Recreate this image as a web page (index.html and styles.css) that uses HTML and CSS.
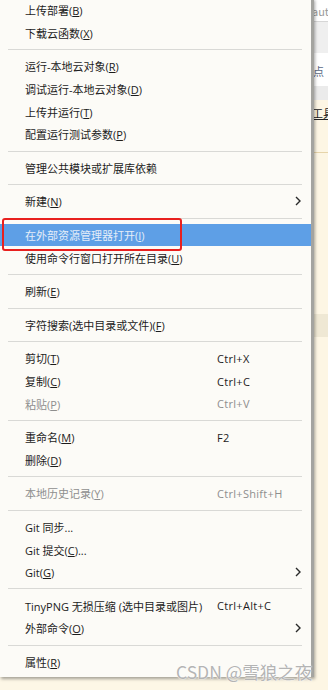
FILE: index.html
```html
<!DOCTYPE html>
<html lang="zh-CN">
  <head>
    <meta charset="UTF-8" />
    <meta name="viewport" content="width=device-width, initial-scale=1.0" />
    <title>右键菜单</title>
    <link rel="stylesheet" href="styles.css">
  </head>
  <body>
    <div class="screen">
      <div class="menu">
        <div class="item"><span class="label">上传部署(<u>B</u>)</span></div>
        <div class="item"><span class="label">下载云函数(<u>X</u>)</span></div>
        <div class="sep"></div>
        <div class="item"><span class="label">运行-本地云对象(<u>R</u>)</span></div>
        <div class="item"><span class="label">调试运行-本地云对象(<u>D</u>)</span></div>
        <div class="item"><span class="label">上传并运行(<u>T</u>)</span></div>
        <div class="item"><span class="label">配置运行测试参数(<u>P</u>)</span></div>
        <div class="sep"></div>
        <div class="item"><span class="label">管理公共模块或扩展库依赖</span></div>
        <div class="sep"></div>
        <div class="item">
          <span class="label">新建(<u>N</u>)</span>
          <svg class="arrow" width="6" height="10" viewBox="0 0 6 10"><path d="M1 1 L5 5 L1 9" /></svg>
        </div>
        <div class="sep"></div>
        <div class="item active">
          <span class="label">在外部资源管理器打开(<u>I</u>)</span>
          <span class="mark"></span>
        </div>
        <div class="item"><span class="label">使用命令行窗口打开所在目录(<u>U</u>)</span></div>
        <div class="sep"></div>
        <div class="item"><span class="label">刷新(<u>E</u>)</span></div>
        <div class="sep"></div>
        <div class="item"><span class="label">字符搜索(选中目录或文件)(<u>F</u>)</span></div>
        <div class="sep"></div>
        <div class="item"><span class="label">剪切(<u>T</u>)</span><span class="key">Ctrl+X</span></div>
        <div class="item"><span class="label">复制(<u>C</u>)</span><span class="key">Ctrl+C</span></div>
        <div class="item disabled"><span class="label">粘贴(<u>P</u>)</span><span class="key">Ctrl+V</span></div>
        <div class="sep"></div>
        <div class="item"><span class="label">重命名(<u>M</u>)</span><span class="key">F2</span></div>
        <div class="item"><span class="label">删除(<u>D</u>)</span></div>
        <div class="sep"></div>
        <div class="item disabled"><span class="label">本地历史记录(<u>Y</u>)</span><span class="key">Ctrl+Shift+H</span></div>
        <div class="sep"></div>
        <div class="item"><span class="label">Git 同步...</span></div>
        <div class="item"><span class="label">Git 提交(<u>C</u>)...</span></div>
        <div class="item">
          <span class="label">Git(<u>G</u>)</span>
          <svg class="arrow" width="6" height="10" viewBox="0 0 6 10"><path d="M1 1 L5 5 L1 9" /></svg>
        </div>
        <div class="sep"></div>
        <div class="item"><span class="label">TinyPNG 无损压缩 (选中目录或图片)</span><span class="key">Ctrl+Alt+C</span></div>
        <div class="item">
          <span class="label">外部命令(<u>O</u>)</span>
          <svg class="arrow" width="6" height="10" viewBox="0 0 6 10"><path d="M1 1 L5 5 L1 9" /></svg>
        </div>
        <div class="sep"></div>
        <div class="item"><span class="label">属性(<u>R</u>)</span></div>
      </div>

      <div class="side">
        <div class="side-top">auth</div>
        <div class="side-gray"></div>
        <div class="side-white">点</div>
        <div class="side-gray2"></div>
        <div class="side-tool"><u>工具</u></div>
        <div class="side-cream"></div>
        <div class="side-band"></div>
        <div class="side-rest"></div>
      </div>
    </div>
    <div class="watermark">CSDN @雪狼之夜</div>
  </body>
</html>
```

FILE: styles.css
```css
/* Page */
* {
  box-sizing: border-box;
  margin: 0;
  padding: 0;
}
body {
  width: 328px;
  height: 690px;
  overflow: hidden;
  position: relative;
  background: #fdf7e6;
  font-family: "Open Sans", "Noto Sans CJK SC", sans-serif;
  font-size: 11px;
  color: #1c1c1c;
}
.screen {
  display: flex;
  align-items: flex-start;
  height: 690px;
  overflow: hidden;
}

/* Context menu */
.menu {
  width: 314px;
  flex: none;
  margin-top: -2px;
  padding: 1px 0 4px;
  background: #fcfbf7;
  border-right: 3px solid #a4a4a0;
  box-shadow: 1px 2px 3px rgba(0, 0, 0, 0.35);
  position: relative;
  z-index: 2;
}
.item {
  display: flex;
  align-items: center;
  height: 22.6px;
  padding-left: 25px;
  position: relative;
  white-space: nowrap;
}
.label {
  width: 192px;
  flex: none;
}
.key {
  flex: none;
  letter-spacing: 0.3px;
}
.item u {
  text-underline-offset: 1px;
}
.disabled {
  color: #8e8e8e;
}
.active {
  background: #5e9fe6;
  color: #e4edf8;
}
.arrow {
  position: absolute;
  left: 295px;
  top: 6px;
}
.arrow path {
  fill: none;
  stroke: #2a2a2a;
  stroke-width: 1.4;
}
.sep {
  height: 11px;
  padding: 5px 9px 0 8px;
}
.sep::after {
  content: "";
  display: block;
  height: 1px;
  background: #d9d9d6;
}

/* Red highlight box */
.mark {
  position: absolute;
  left: 2px;
  top: -6px;
  width: 180px;
  height: 33px;
  border: 2px solid #e8201e;
  border-radius: 3px;
}

/* Background window at the right */
.side {
  flex: 1;
  overflow: hidden;
  margin-left: -4px;
  font-family: "Noto Sans CJK SC", sans-serif;
}
.side-top {
  height: 22px;
  background: #ffffff;
  border-bottom: 1px solid #d6d6d6;
  color: #9a9a9a;
  line-height: 22px;
  white-space: nowrap;
  padding-left: 2px;
}
.side-gray {
  height: 31px;
  background: #efefef;
}
.side-white {
  height: 33px;
  background: #ffffff;
  color: #5b6a86;
  padding-top: 11px;
  line-height: 14px;
  padding-left: 3px;
}
.side-gray2 {
  height: 14px;
  background: #ebebeb;
}
.side-tool {
  height: 53px;
  background: #fdf6e4;
  border-bottom: 1px solid #e6d4aa;
  padding-top: 6px;
  line-height: 14px;
  white-space: nowrap;
  padding-left: 2px;
  color: #222;
}
.side-cream {
  height: 161px;
  background: #fdf6e4;
}
.side-band {
  height: 23px;
  background: #efe8d4;
}
.side-rest {
  height: 353px;
  background: #fdf6e4;
}

/* Watermark */
.watermark {
  position: absolute;
  left: 176px;
  top: 662px;
  z-index: 3;
  font-family: "Noto Sans CJK SC", sans-serif;
  font-size: 17.5px;
  line-height: 20px;
  color: #b4b4b4;
  text-shadow: 0 0 2px #ffffff, 0 0 1px #ffffff;
  white-space: nowrap;
}
```
